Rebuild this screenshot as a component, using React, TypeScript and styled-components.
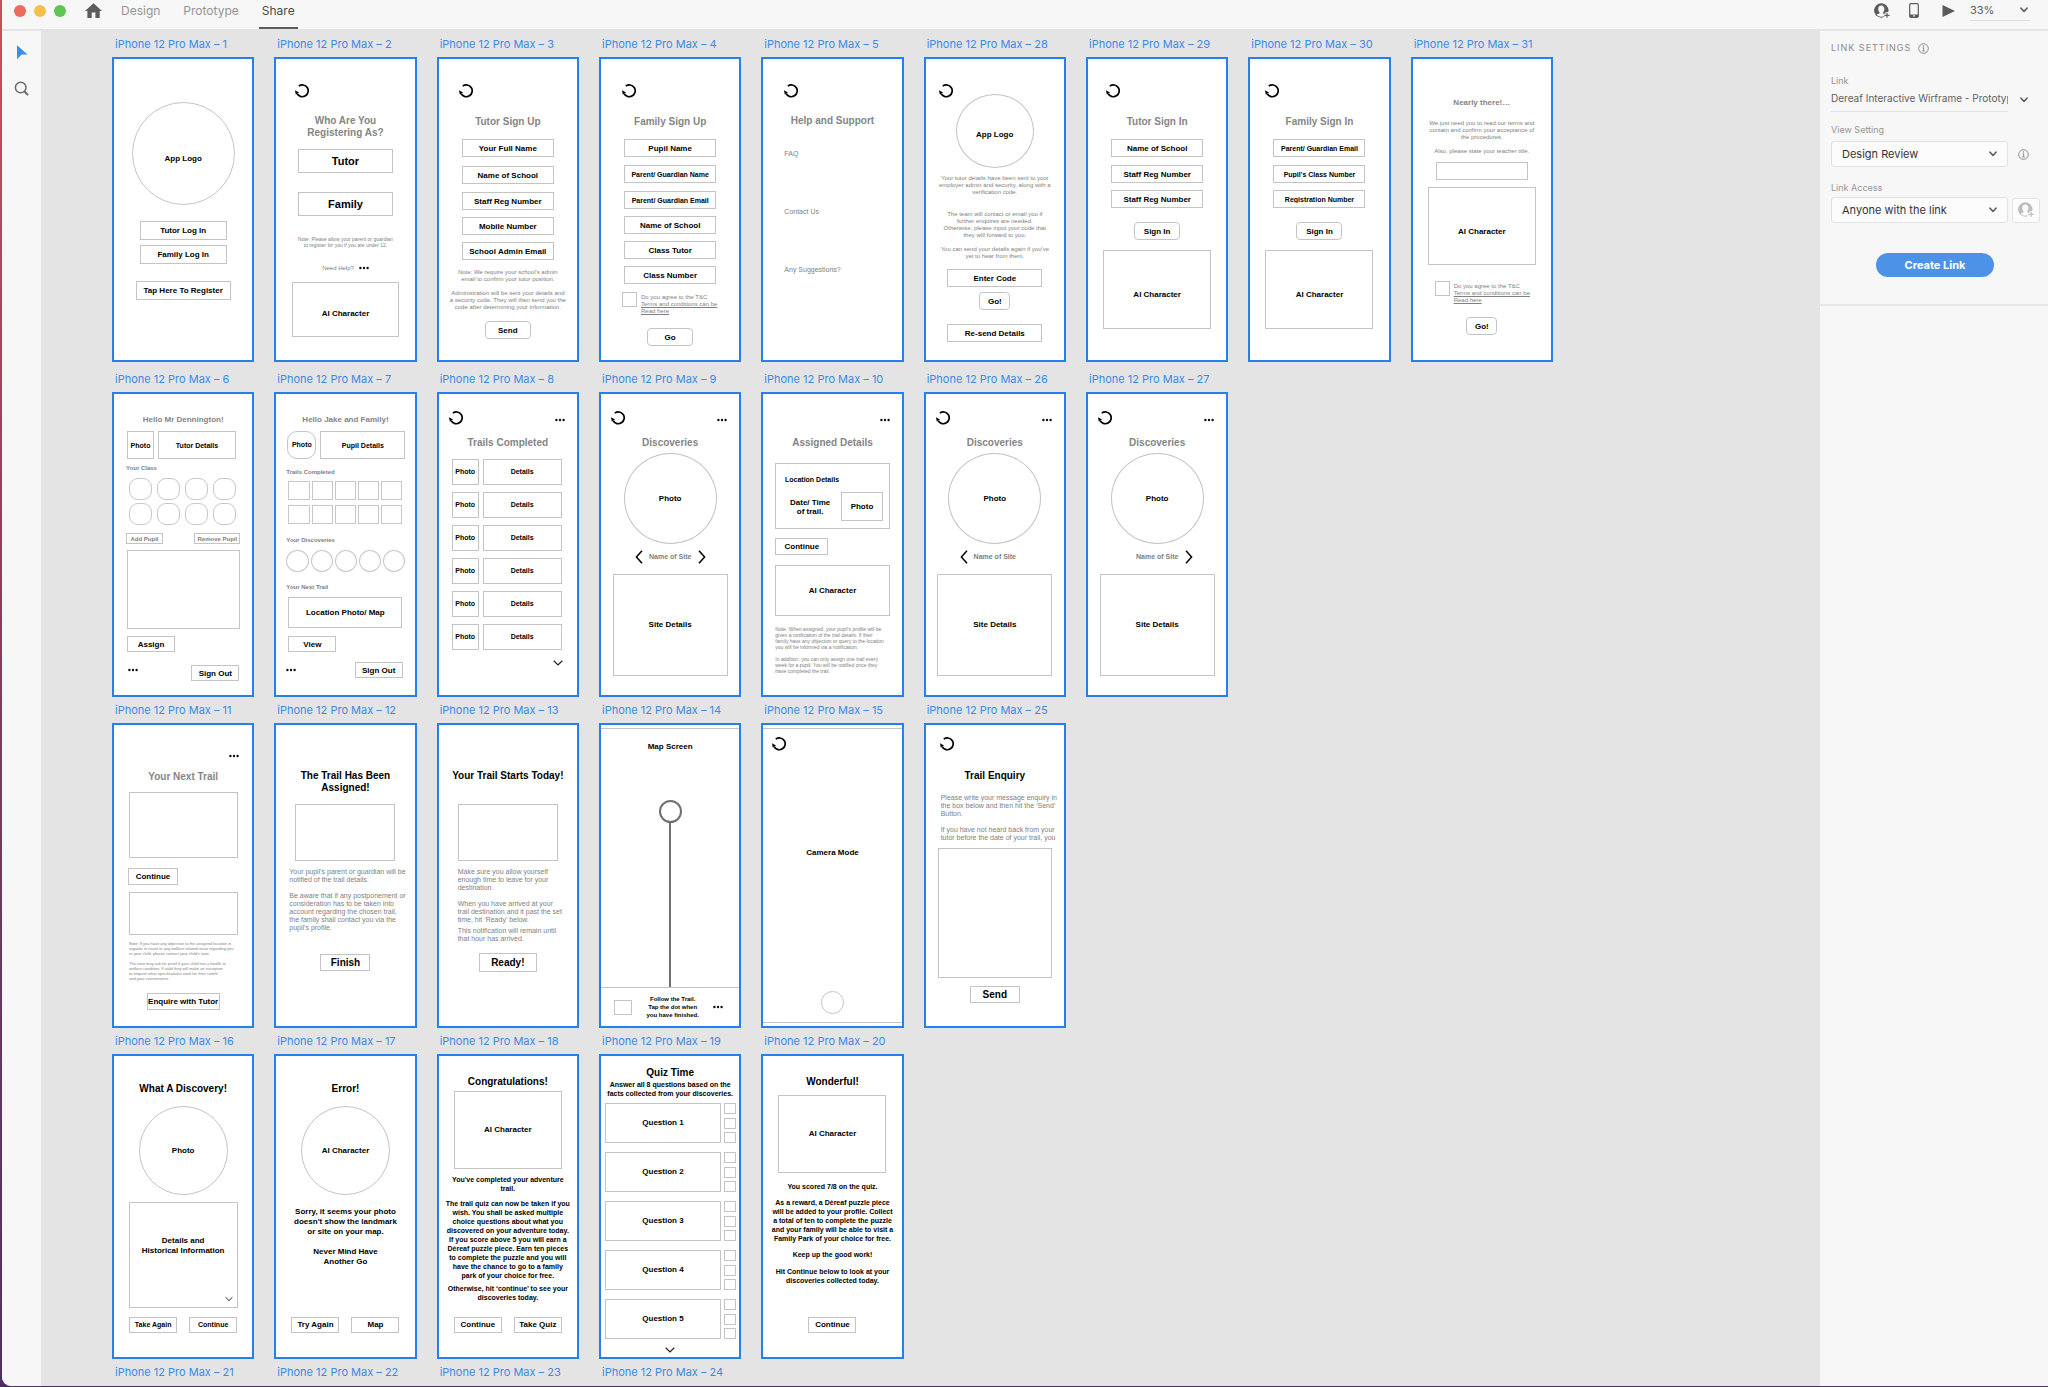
import React from 'react';
import styled, { createGlobalStyle, css } from 'styled-components';

const ui = `Inter, "Noto Sans", sans-serif`;
const wire = `"Liberation Sans", Arial, sans-serif`;

const GlobalStyle = createGlobalStyle`
  *, *::before, *::after { box-sizing: border-box; }
  body { margin: 0; background: #e4e4e4; font-family: ${ui}; }
  button, input, select, textarea { font: inherit; color: inherit; margin: 0; }
  p, h1, h2, h3, figure { margin: 0; }
`;

/* ---------- application frame ---------- */

const Desktop = styled.div`
  min-height: 100vh;
  display: flex;
  padding: 0 0 1px 2px;
  background: linear-gradient(180deg, #c9505c 0%, #8e3a5c 45%, #4d3062 100%);
`;

const Window = styled.div`
  flex: 1;
  min-width: 0;
  display: flex;
  flex-direction: column;
  background: #e4e4e4;
  border-bottom-left-radius: 9px;
  overflow: hidden;
`;

const TopBar = styled.header`
  height: 31px;
  display: flex;
  justify-content: space-between;
  background: #f7f7f7;
  border-bottom: 2px solid #e4e4e4;
  color: #5c5c5c;
`;

const TopGroup = styled.div<{ $gap: number; $end?: boolean }>`
  display: flex;
  align-items: center;
  gap: ${p => p.$gap}px;
  padding: ${p => (p.$end ? '0 18px 8px 0' : '0 0 8px 12px')};
`;

const Lights = styled.div`
  display: flex;
  gap: 8px;
  padding-right: 3px;
`;

const Light = styled.span<{ $color: string }>`
  width: 12px;
  height: 12px;
  border-radius: 50%;
  background: ${p => p.$color};
`;

const IconButton = styled.button`
  display: flex;
  padding: 0;
  border: 0;
  background: none;
`;

const TopActions = styled.div`
  display: flex;
  align-items: center;
  gap: 19px;
`;

const Tabs = styled.nav`
  display: flex;
  align-self: flex-start;
  gap: 17px;
`;

const Tab = styled.button<{ $active?: boolean }>`
  height: 29px;
  padding: 0 3px 6px;
  border: 0;
  border-bottom: 2px solid ${p => (p.$active ? '#5c5c5c' : 'transparent')};
  background: none;
  font-size: 12px;
  line-height: 20px;
  color: ${p => (p.$active ? '#4b4b4b' : '#959595')};
`;

const Main = styled.div`
  flex: 1;
  display: flex;
`;

const ToolRail = styled.aside`
  width: 39px;
  display: flex;
  flex-direction: column;
  align-items: center;
  gap: 21px;
  padding-top: 14px;
  background: #f7f7f7;
`;

/* ---------- canvas ---------- */

const Canvas = styled.main`
  flex: 1;
  min-width: 0;
  padding: 0 267px 0 71px;
`;

const Row = styled.section<{ $mt?: number }>`
  display: grid;
  grid-template-columns: repeat(9, minmax(0, 1fr));
  column-gap: 20px;
  margin-top: ${p => p.$mt ?? 0}px;
`;

const BoardName = styled.figcaption`
  padding-left: 3px;
  font-size: 11px;
  line-height: 26px;
  white-space: nowrap;
  color: #3b8ae6;
`;

const Sheet = styled.div`
  height: 305px;
  display: flex;
  flex-direction: column;
  align-items: center;
  border: 2px solid #2680eb;
  background: #fff;
  font-family: ${wire};
  color: #000;
  overflow: hidden;
`;

type Place = { $mt?: number; $x?: number };

const place = css<Place>`
  flex-shrink: 0;
  margin-top: ${p => p.$mt ?? 0}px;
  ${p => p.$x !== undefined && `align-self: flex-start; margin-left: ${p.$x}px;`}
`;

const Title = styled.h2<Place & { $dark?: boolean; $small?: boolean }>`
  ${place}
  padding-top: 1px;
  margin-bottom: -1px;
  font-size: ${p => (p.$small ? 8 : 10)}px;
  line-height: ${p => (p.$small ? 10 : 12)}px;
  font-weight: 700;
  text-align: center;
  white-space: pre;
  color: ${p => (p.$dark ? '#000' : '#858585')};
`;

const Caption = styled.h3<Place>`
  ${place}
  font-size: 6px;
  line-height: 8px;
  font-weight: 700;
  color: #808080;
`;

const Copy = styled.p<Place & { $size: number; $lh: number; $bold?: boolean; $left?: boolean; $strong?: boolean }>`
  ${place}
  font-size: ${p => p.$size}px;
  line-height: ${p => p.$lh}px;
  font-weight: ${p => (p.$bold ? 700 : 400)};
  text-align: ${p => (p.$left ? 'left' : 'center')};
  white-space: pre;
  color: ${p => (p.$bold ? '#000' : '#808080')};
`;

type Shape = Place & { $w: number; $h: number; $size?: number; $drop?: number; $r?: string };

const shape = css<Shape>`
  ${place}
  width: ${p => p.$w}px;
  height: ${p => p.$h}px;
  padding: ${p => p.$drop ?? 0}px 0 0;
  border: 1px solid #c4c4c4;
  border-radius: ${p => p.$r ?? '0'};
  background: #fff;
  font-family: ${wire};
  font-size: ${p => p.$size ?? 8}px;
  line-height: 10px;
  font-weight: 700;
  text-align: center;
  white-space: nowrap;
`;

const Box = styled.div<Shape>`
  ${shape}
  display: flex;
  align-items: center;
  justify-content: center;
`;

const Action = styled.button<Shape & { $muted?: boolean }>`
  ${shape}
  ${p => p.$muted && 'color: #808080;'}
`;

const Field = styled.input<Shape>`
  ${shape}
`;

const Message = styled.textarea<Shape>`
  ${shape}
  resize: none;
  display: block;
`;

const Tick = styled.input.attrs({ type: 'checkbox' })<{ $w: number; $h: number }>`
  appearance: none;
  flex-shrink: 0;
  width: ${p => p.$w}px;
  height: ${p => p.$h}px;
  border: 1px solid #c4c4c4;
  background: #fff;
`;

const Line = styled.div<Place & { $w?: string; $gap?: number; $spread?: boolean; $top?: boolean; $pad?: string }>`
  ${place}
  width: ${p => p.$w ?? 'auto'};
  display: flex;
  align-items: ${p => (p.$top ? 'flex-start' : 'center')};
  justify-content: ${p => (p.$spread ? 'space-between' : 'flex-start')};
  gap: ${p => p.$gap ?? 0}px;
  padding: ${p => p.$pad ?? '0'};
`;

const Tiles = styled.div<Place & { $w: number; $cols: number; $gap: string; $h: number; $r?: string }>`
  ${place}
  width: ${p => p.$w}px;
  display: grid;
  grid-template-columns: repeat(${p => p.$cols}, 1fr);
  grid-auto-rows: ${p => p.$h}px;
  gap: ${p => p.$gap};

  & > span {
    border: 1px solid #c8c8c8;
    border-radius: ${p => p.$r ?? '0'};
  }
`;

const Terms = styled.label`
  padding-top: 2px;
  font-size: 6px;
  line-height: 7px;
  white-space: pre;
  color: #808080;

  a { color: inherit; text-decoration: underline; }
`;

const Slot = styled.span`
  width: 7px;
  display: flex;
`;

/* ---------- canvas icons ---------- */

const Icon = styled.svg`
  display: block;
  flex-shrink: 0;
`;

const Refresh = () => (
  <Icon width="14" height="14" viewBox="0 0 14 14" aria-label="Reload">
    <path d="M3.8 2.1A5.900 5.900 0 1 1 2.200 9.800" fill="none" stroke="#000" strokeWidth="1.700" />
    <path d="M0 6.200 4 8.500.8 10.600Z" fill="#000" />
  </Icon>
);

const Mark = styled.div<Place>`
  ${place}
`;

const Back = ({ x, mt = 25 }: { x: number; mt?: number }) => (
  <Mark $x={x} $mt={mt}><Refresh /></Mark>
);

const Dots = () => (
  <Icon width="10" height="4" viewBox="0 0 10 4" aria-label="More">
    <circle cx="1.4" cy="2" r="1.2" fill="#111" />
    <circle cx="5" cy="2" r="1.2" fill="#111" />
    <circle cx="8.6" cy="2" r="1.2" fill="#111" />
  </Icon>
);

const DownMark = ({ w = 10 }: { w?: number }) => (
  <Icon width={w} height="6" viewBox="0 0 10 6" aria-label="Scroll down">
    <path d="M.7.8 5 5 9.3.8" fill="none" stroke="#222" strokeWidth="1.2" />
  </Icon>
);

const SideMark = ({ flip }: { flip?: boolean }) => (
  <Icon width="8" height="14" viewBox="0 0 8 14" aria-label={flip ? 'Next' : 'Previous'}>
    <path d={flip ? 'M1 .7 6.600 7 1 13.300' : 'M7 .7 1.400 7 7 13.300'} fill="none" stroke="#000" strokeWidth="1.5" />
  </Icon>
);

/* ---------- repeated wireframe parts ---------- */

const Board = ({ n, children }: { n: number; children?: React.ReactNode }) => (
  <figure>
    <BoardName>iPhone 12 Pro Max – {n}</BoardName>
    {children && <Sheet>{children}</Sheet>}
  </figure>
);

const Entry = ({ text, mt, size = 8, w = 92 }: { text: string; mt: number; size?: number; w?: number }) => (
  <Field $w={w} $h={18} $mt={mt} $size={size} defaultValue={text} aria-label={text || 'Teacher title'} />
);

const Agreement = ({ id, mt, x }: { id: string; mt: number; x: number }) => (
  <Line $mt={mt} $x={x} $gap={4} $top>
    <Tick id={id} $w={15} $h={15} />
    <Terms htmlFor={id}>
      {'Do you agree to the T&C\n'}
      <a href="#terms">{'Terms and conditions can be\nRead here'}</a>
    </Terms>
  </Line>
);

const PageHead = ({ back = true }: { back?: boolean }) => (
  <Line $w="100%" $mt={17} $spread $pad="0 12px 0 10px">
    {back ? <Refresh /> : <Slot />}
    <Mark $mt={3}><Dots /></Mark>
  </Line>
);

const Pair = ({ left, right, mt, size = 8 }: { left: string; right: string; mt: number; size?: number }) => (
  <Line $w="108px" $mt={mt} $spread>
    <Action $w={48} $h={16} $size={size}>{left}</Action>
    <Action $w={48} $h={16} $size={size}>{right}</Action>
  </Line>
);

const Discovery = ({ n, prev, next }: { n: number; prev?: boolean; next?: boolean }) => (
  <Board n={n}>
    <PageHead />
    <Title $mt={11}>Discoveries</Title>
    <Box $w={93} $h={91} $mt={5} $r="50%">Photo</Box>
    <Line $w="70px" $mt={6} $spread>
      <Slot>{prev && <SideMark />}</Slot>
      <Copy $size={7} $lh={14}><b>Name of Site</b></Copy>
      <Slot>{next && <SideMark flip />}</Slot>
    </Line>
    <Box $w={115} $h={102} $mt={10}>Site Details</Box>
  </Board>
);

const tiles = (count: number) => Array.from({ length: count }, (_, i) => <span key={i} />);

const PlanCard = styled.div`
  flex-shrink: 0;
  width: 115px;
  height: 66px;
  margin-top: 15px;
  padding: 11px 6px 6px 9px;
  border: 1px solid #c4c4c4;
`;

const DetailsCard = styled.div`
  flex-shrink: 0;
  width: 109px;
  height: 106px;
  margin-top: 7px;
  padding: 33px 4px 5px;
  display: flex;
  flex-direction: column;
  align-items: center;
  border: 1px solid #c4c4c4;
`;

const CardFoot = styled.div`
  margin-top: auto;
  align-self: flex-end;
`;

const MapArea = styled.div`
  width: 100%;
  height: 259px;
  margin-top: 3px;
  display: flex;
  flex-direction: column;
  align-items: center;
  border-top: 1px solid #c4c4c4;
`;

const Pin = styled.div`
  width: 23px;
  height: 23px;
  margin-top: 49px;
  border: 2px solid #707070;
  border-radius: 50%;
`;

const Trail = styled.div`
  flex: 1;
  width: 2px;
  background: #707070;
`;

const MapFoot = styled.div`
  flex: 1;
  width: 100%;
  display: flex;
  align-items: center;
  justify-content: space-between;
  padding: 0 16px 0 13px;
  border-top: 1px solid #c4c4c4;
`;

const CameraArea = styled.div`
  width: 100%;
  height: 295px;
  margin-top: 3px;
  display: flex;
  flex-direction: column;
  align-items: center;
  border: 1px solid #c4c4c4;
  border-width: 1px 0;
`;

const Answers = styled.div`
  height: 40px;
  display: flex;
  flex-direction: column;
  justify-content: space-between;
`;

/* ---------- settings panel ---------- */

const Panel = styled.aside`
  width: 228px;
  background: #f7f7f7;
`;

const PanelSection = styled.section`
  padding: 9px 8px 27px 11px;
  border-bottom: 2px solid #e6e6e6;
`;

const PanelTitle = styled.h2`
  display: flex;
  align-items: center;
  gap: 7px;
  font-size: 9px;
  line-height: 16px;
  font-weight: 400;
  letter-spacing: 1px;
  color: #8c8c8c;
`;

const PanelLabel = styled.label<{ $mt: number }>`
  display: block;
  margin-top: ${p => p.$mt}px;
  font-size: 9px;
  line-height: 12px;
  color: #969696;
`;

const PanelLine = styled.div<{ $mt?: number }>`
  display: grid;
  grid-template-columns: minmax(0, 1fr) 28px;
  align-items: center;
  justify-items: center;
  column-gap: 4px;
  margin-top: ${p => p.$mt ?? 0}px;

  & > svg { margin-right: 5px; }
`;

const PlainSelect = styled.select`
  appearance: none;
  width: 100%;
  height: 25px;
  padding: 0 0 2px;
  border: 0;
  border-bottom: 1px solid #e2e2e2;
  background: none;
  font-size: 10px;
  color: #5f5f5f;
  text-overflow: clip;
`;

const SelectFrame = styled.div`
  width: 100%;
  height: 26px;
  display: grid;
  grid-template-columns: minmax(0, 1fr) 18px;
  align-items: center;
  border: 1px solid #e2e2e2;
  border-radius: 3px;
  background: #fcfcfc;

  select {
    grid-area: 1 / 1 / 2 / 3;
    appearance: none;
    height: 24px;
    padding: 0 20px 0 10px;
    border: 0;
    background: none;
    font-size: 11px;
    color: #333;
  }

  svg { grid-area: 1 / 2; pointer-events: none; }
`;

const InviteButton = styled.button`
  width: 28px;
  height: 25px;
  display: flex;
  align-items: center;
  justify-content: center;
  padding: 0;
  border: 1px solid #e4e4e4;
  border-radius: 3px;
  background: #fcfcfc;
`;

const CreateButton = styled.button`
  display: block;
  width: 118px;
  height: 24px;
  margin: 30px 0 0 45px;
  padding: 0;
  border: 0;
  border-radius: 12px;
  background: #4c93e8;
  font-size: 11px;
  font-weight: 700;
  color: #fff;
`;

const Zoom = styled.label`
  width: 60px;
  height: 20px;
  display: grid;
  grid-template-columns: 1fr 10px;
  align-items: center;
  border-bottom: 1px solid #dedede;

  select {
    grid-area: 1 / 1 / 2 / 3;
    appearance: none;
    height: 18px;
    padding: 0;
    border: 0;
    background: none;
    font-size: 11px;
  }

  svg { grid-area: 1 / 2; pointer-events: none; }
`;

const Chevron = () => (
  <Icon width="8" height="6" viewBox="0 0 8 6" aria-hidden="true">
    <path d="M1 1.2 4 4.4 7 1.2" fill="none" stroke="#5c5c5c" strokeWidth="1.6" strokeLinecap="round" strokeLinejoin="round" />
  </Icon>
);

const Info = () => (
  <Icon width="11" height="11" viewBox="0 0 11 11" aria-label="Information">
    <circle cx="5.5" cy="5.5" r="4.8" fill="none" stroke="#8a8a8a" />
    <path d="M4.6 4.8h1v3M4.3 7.9h2.5" fill="none" stroke="#8a8a8a" />
    <circle cx="5.4" cy="3" r=".8" fill="#8a8a8a" />
  </Icon>
);

const Person = ({ color = '#5c5c5c', bg = '#f7f7f7' }: { color?: string; bg?: string }) => (
  <Icon width="16" height="16" viewBox="0 0 16 16" aria-hidden="true">
    <circle cx="7.3" cy="7.5" r="7.2" fill={color} />
    <path
      d="M7.3 2.4C5.4 2.4 4.2 3.8 4.2 5.8c0 1.5.5 2.7 1.3 3.4v1c-.8.5-2 .8-2.9 1.4 1.1 1.5 2.7 2.2 4.7 2.2s3.4-.7 4.5-2c-.8-.7-1.9-1-2.7-1.5V9.2c.8-.7 1.3-1.9 1.3-3.4 0-2-1.2-3.4-3.1-3.4Z"
      fill={bg}
    />
    <path d="M13 9v7M9.700 12.300h6.300" stroke={bg} strokeWidth="3" />
    <path d="M13 9.800v5M10.500 12.300h5" stroke={color} strokeWidth="1.200" />
  </Icon>
);

const questions = [1, 2, 3, 4, 5];

export default function App() {
  return (
    <Desktop>
      <GlobalStyle />
      <Window>
        <TopBar>
          <TopGroup $gap={16}>
            <Lights>
              <Light $color="#ed6a5e" />
              <Light $color="#f4bf4f" />
              <Light $color="#61c454" />
            </Lights>
            <IconButton aria-label="Home">
              <Icon width="17" height="15" viewBox="0 0 17 15">
                <path d="M8.500.3 17 8h-2.300v7h-4.300V9.500H6.700V15H2.400V8H0Z" fill="#5c5c5c" />
              </Icon>
            </IconButton>
            <Tabs>
              <Tab>Design</Tab>
              <Tab>Prototype</Tab>
              <Tab $active>Share</Tab>
            </Tabs>
          </TopGroup>
          <TopGroup $gap={14} $end>
            <TopActions>
              <IconButton aria-label="Invite"><Person /></IconButton>
              <IconButton aria-label="Device preview">
                <Icon width="10" height="15" viewBox="0 0 10 15">
                  <rect x=".7" y=".7" width="8.600" height="13.600" rx="1.200" fill="none" stroke="#5c5c5c" strokeWidth="1.200" />
                  <path d="M.7 11.500h8.600v2.800H.7Z" fill="#5c5c5c" />
                  <circle cx="5" cy="12.900" r=".8" fill="#f7f7f7" />
                </Icon>
              </IconButton>
              <IconButton aria-label="Play">
                <Icon width="18" height="12" viewBox="0 0 18 12">
                  <path d="M4.500 0 17 6 4.500 12Z" fill="#5c5c5c" />
                </Icon>
              </IconButton>
            </TopActions>
            <Zoom>
              <select aria-label="Zoom level"><option>33%</option></select>
              <Chevron />
            </Zoom>
          </TopGroup>
        </TopBar>

        <Main>
          <ToolRail>
            <IconButton aria-label="Select">
              <Icon width="14" height="15" viewBox="0 0 14 15">
                <path d="M2 .3 12.500 9.600H6.700L2 14.300Z" fill="#3f8ee6" />
              </Icon>
            </IconButton>
            <IconButton aria-label="Zoom">
              <Icon width="15" height="15" viewBox="0 0 15 15">
                <circle cx="6.700" cy="6.500" r="5.300" fill="none" stroke="#6a6a6a" strokeWidth="1.500" />
                <path d="M10.500 10.500 14 14.200" stroke="#6a6a6a" strokeWidth="1.900" />
              </Icon>
            </IconButton>
          </ToolRail>

          <Canvas>
            <Row>
              <Board n={1}>
                <Box $w={103} $h={103} $mt={43} $r="50%" $drop={10}>App Logo</Box>
                <Action $w={87} $h={19} $mt={16}>Tutor Log In</Action>
                <Action $w={87} $h={19} $mt={5}>Family Log In</Action>
                <Action $w={95} $h={19} $mt={17}>Tap Here To Register</Action>
              </Board>

              <Board n={2}>
                <Back x={19} />
                <Title $mt={16}>{'Who Are You\nRegistering As?'}</Title>
                <Action $w={95} $h={24} $mt={11} $size={11}>Tutor</Action>
                <Action $w={95} $h={24} $mt={19} $size={11}>Family</Action>
                <Copy $mt={20} $size={5} $lh={6}>{'Note: Please allow your parent or guardian\nto register for you if you are under 12.'}</Copy>
                <Line $mt={16} $gap={5}>
                  <Copy $size={6} $lh={8}>Need Help?</Copy>
                  <Dots />
                </Line>
                <Box $w={107} $h={55} $mt={10} $drop={8}>AI Character</Box>
              </Board>

              <Board n={3}>
                <Back x={20} />
                <Title $mt={17}>Tutor Sign Up</Title>
                <Entry text="Your Full Name" mt={12} />
                <Entry text="Name of School" mt={9} />
                <Entry text="Staff Reg Number" mt={8} />
                <Entry text="Mobile Number" mt={7} />
                <Entry text="School Admin Email" mt={7} />
                <Copy $mt={9} $size={6} $lh={7}>
                  {"Note: We require your school's admin\nemail to confirm your tutor position.\n\nAdministration will be sent your details and\na security code. They will then send you the\ncode after determining your information."}
                </Copy>
                <Action $w={46} $h={18} $mt={10} $r="4px" $drop={1}>Send</Action>
              </Board>

              <Board n={4}>
                <Back x={21} />
                <Title $mt={17}>Family Sign Up</Title>
                <Entry text="Pupil Name" mt={12} />
                <Entry text="Parent/ Guardian Name" mt={8} size={7} />
                <Entry text="Parent/ Guardian Email" mt={8} size={7} />
                <Entry text="Name of School" mt={7} />
                <Entry text="Class Tutor" mt={7} />
                <Entry text="Class Number" mt={7} />
                <Agreement id="agree-family" mt={8} x={21} />
                <Action $w={46} $h={18} $mt={13} $r="4px" $drop={1}>Go</Action>
              </Board>

              <Board n={5}>
                <Back x={21} />
                <Title $mt={16}>Help and Support</Title>
                <Copy $mt={24} $x={21} $size={7} $lh={8}>FAQ</Copy>
                <Copy $mt={50} $x={21} $size={7} $lh={8}>Contact Us</Copy>
                <Copy $mt={50} $x={21} $size={7} $lh={8}>Any Suggestions?</Copy>
              </Board>

              <Board n={28}>
                <Line $mt={25} $x={13} $gap={3} $top>
                  <Refresh />
                  <Box $w={78} $h={74} $mt={10} $r="50%" $drop={8}>App Logo</Box>
                </Line>
                <Copy $mt={7} $size={6} $lh={7}>{'Your tutor details have been sent to your\nemployer admin and security, along with a\nverification code.'}</Copy>
                <Copy $mt={15} $size={6} $lh={7}>{'The team will contact or email you if\nfurther enquires are needed.\nOtherwise, please input your code that\nthey will forward to you.'}</Copy>
                <Copy $mt={7} $size={6} $lh={7}>{"You can send your details again if you've\nyet to hear from them."}</Copy>
                <Entry text="Enter Code" mt={9} w={95} />
                <Action $w={31} $h={18} $mt={5} $r="4px" $drop={1}>Go!</Action>
                <Action $w={95} $h={18} $mt={14} $drop={1}>Re-send Details</Action>
              </Board>

              <Board n={29}>
                <Back x={18} />
                <Title $mt={17}>Tutor Sign In</Title>
                <Entry text="Name of School" mt={12} />
                <Entry text="Staff Reg Number" mt={8} />
                <Entry text="Staff Reg Number" mt={7} />
                <Action $w={46} $h={18} $mt={14} $r="4px" $drop={1}>Sign In</Action>
                <Box $w={108} $h={79} $mt={10} $drop={11}>AI Character</Box>
              </Board>

              <Board n={30}>
                <Back x={15} />
                <Title $mt={17}>Family Sign In</Title>
                <Entry text="Parent/ Guardian Email" mt={12} size={7} />
                <Entry text="Pupil's Class Number" mt={8} size={7} />
                <Entry text="Registration Number" mt={7} size={7} />
                <Action $w={46} $h={18} $mt={14} $r="4px" $drop={1}>Sign In</Action>
                <Box $w={108} $h={79} $mt={10} $drop={11}>AI Character</Box>
              </Board>

              <Board n={31}>
                <Title $mt={38} $small>Nearly there!…</Title>
                <Copy $mt={13} $size={6} $lh={7}>{'We just need you to read our terms and\ncontain and confirm your acceptance of\nthe procedures.\n\nAlso, please state your teacher title.'}</Copy>
                <Entry text="" mt={7} />
                <Box $w={108} $h={78} $mt={7} $drop={11}>AI Character</Box>
                <Agreement id="agree-teacher" mt={16} x={22} />
                <Action $w={31} $h={18} $mt={13} $r="4px" $drop={1}>Go!</Action>
              </Board>
            </Row>

            <Row $mt={4}>
              <Board n={6}>
                <Title $mt={20} $small>Hello Mr Dennington!</Title>
                <Line $mt={7} $x={13} $gap={4}>
                  <Box $w={27} $h={28} $size={7} $drop={2}>Photo</Box>
                  <Box $w={78} $h={28} $size={7} $drop={2}>Tutor Details</Box>
                </Line>
                <Caption $mt={5} $x={12}>Your Class</Caption>
                <Tiles $w={107} $cols={4} $h={22} $gap="3px 5px" $mt={6} $x={15} $r="9px">{tiles(8)}</Tiles>
                <Line $w="100%" $mt={8} $spread $pad="0 12px">
                  <Action $w={37} $h={11} $size={6} $muted>Add Pupil</Action>
                  <Action $w={46} $h={11} $size={6} $muted>Remove Pupil</Action>
                </Line>
                <Box $w={113} $h={79} $mt={6} $x={13} />
                <Action $w={48} $h={16} $mt={7} $x={13} $drop={1}>Assign</Action>
                <Line $w="100%" $mt={13} $spread $top $pad="0 13px 0 14px">
                  <Mark $mt={3}><Dots /></Mark>
                  <Action $w={48} $h={16} $drop={1}>Sign Out</Action>
                </Line>
              </Board>

              <Board n={7}>
                <Title $mt={20} $small>Hello Jake and Family!</Title>
                <Line $mt={7} $x={11} $gap={4}>
                  <Box $w={29} $h={28} $size={7} $r="10px">Photo</Box>
                  <Box $w={85} $h={28} $size={7} $drop={2}>Pupil Details</Box>
                </Line>
                <Caption $mt={9} $x={10}>Trails Completed</Caption>
                <Tiles $w={114} $cols={5} $h={19} $gap="5px 2px" $mt={5} $x={12}>{tiles(10)}</Tiles>
                <Caption $mt={12} $x={10}>Your Discoveries</Caption>
                <Tiles $w={119} $cols={5} $h={22} $gap="2px" $mt={6} $x={10} $r="50%">{tiles(5)}</Tiles>
                <Caption $mt={11} $x={10}>Your Next Trail</Caption>
                <Box $w={114} $h={31} $mt={6} $x={12}>Location Photo/ Map</Box>
                <Action $w={48} $h={16} $mt={8} $x={12} $drop={1}>View</Action>
                <Line $w="100%" $mt={10} $spread $pad="0 12px 0 10px">
                  <Dots />
                  <Action $w={48} $h={16} $drop={1}>Sign Out</Action>
                </Line>
              </Board>

              <Board n={8}>
                <PageHead />
                <Title $mt={11}>Trails Completed</Title>
                {[11, 7, 7, 7, 7, 7].map((mt, i) => (
                  <Line key={i} $mt={mt} $x={13} $gap={4}>
                    <Box $w={27} $h={26} $size={7}>Photo</Box>
                    <Box $w={79} $h={26} $size={7}>Details</Box>
                  </Line>
                ))}
                <Line $w="100%" $mt={10} $spread $pad="0 14px 0 0">
                  <Slot />
                  <DownMark />
                </Line>
              </Board>

              <Discovery n={9} prev next />

              <Board n={10}>
                <Line $w="100%" $mt={17} $spread $pad="0 12px 11px 10px">
                  <Slot />
                  <Mark $mt={7}><Dots /></Mark>
                </Line>
                <Title $mt={3}>Assigned Details</Title>
                <PlanCard>
                  <Copy $size={7} $lh={10} $bold $left>Location Details</Copy>
                  <Line $mt={7} $spread $pad="0 0 0 5px">
                    <Copy $size={8} $lh={9} $bold>{'Date/ Time\nof trail.'}</Copy>
                    <Box $w={42} $h={29}>Photo</Box>
                  </Line>
                </PlanCard>
                <Action $w={53} $h={17} $mt={9} $x={12} $drop={1}>Continue</Action>
                <Box $w={115} $h={51} $mt={10}>AI Character</Box>
                <Copy $mt={10} $x={12} $size={5} $lh={6} $left>
                  {"Note: When assigned, your pupil's profile will be\ngiven a notification of the trail details. If their\nfamily have any objection or query to the location\nyou will be informed via a notification.\n\nIn addition, you can only assign one trail every\nweek for a pupil. You will be notified once they\nhave completed the trail."}
                </Copy>
              </Board>

              <Discovery n={26} prev />
              <Discovery n={27} next />
            </Row>

            <Row>
              <Board n={11}>
                <Line $w="100%" $mt={29} $spread $pad="0 13px 0 0">
                  <Slot />
                  <Dots />
                </Line>
                <Title $mt={12}>Your Next Trail</Title>
                <Box $w={109} $h={66} $mt={10} />
                <Action $w={50} $h={17} $mt={10} $x={14} $drop={1}>Continue</Action>
                <Box $w={109} $h={43} $mt={7} />
                <Copy $mt={6} $x={15} $size={4} $lh={5} $left>
                  {"Note: If you have any objection to the assigned location in\nregards to travel or any welfare related issue regarding you\nor your child, please contact your child's tutor.\n\nThe tutor may ask for proof if your child has a health or\nwelfare condition. If valid they will make an exception\nor enquire what specifications work for their comfit\nand your convenience."}
                </Copy>
                <Action $w={73} $h={17} $mt={12}>Enquire with Tutor</Action>
              </Board>

              <Board n={12}>
                <Title $mt={44} $dark>{'The Trail Has Been\nAssigned!'}</Title>
                <Box $w={100} $h={57} $mt={11} />
                <Copy $mt={7} $x={13} $size={7} $lh={8} $left>
                  {"Your pupil's parent or guardian will be\nnotified of the trail details.\n\nBe aware that if any postponement or\nconsideration has to be taken into\naccount regarding the chosen trail,\nthe family shall contact you via the\npupil's profile."}
                </Copy>
                <Action $w={50} $h={17} $mt={22} $size={10}>Finish</Action>
              </Board>

              <Board n={13}>
                <Title $mt={44} $dark>Your Trail Starts Today!</Title>
                <Box $w={100} $h={57} $mt={23} />
                <Copy $mt={7} $x={19} $size={7} $lh={8} $left>
                  {"Make sure you allow yourself\nenough time to leave for your\ndestination.\n\nWhen you have arrived at your\ntrail destination and it past the set\ntime, hit ‘Ready’ below."}
                </Copy>
                <Copy $mt={3} $x={19} $size={7} $lh={8} $left>{'This notification will remain until\nthat hour has arrived.'}</Copy>
                <Action $w={58} $h={19} $mt={10} $size={10}>Ready!</Action>
              </Board>

              <Board n={14}>
                <MapArea>
                  <Title $mt={12} $small $dark>Map Screen</Title>
                  <Pin />
                  <Trail />
                </MapArea>
                <MapFoot>
                  <Tick $w={18} $h={15} aria-label="Trail finished" />
                  <Copy $size={6} $lh={8} $bold>{'Follow the Trail.\nTap the dot when\nyou have finished.'}</Copy>
                  <Dots />
                </MapFoot>
              </Board>

              <Board n={15}>
                <CameraArea>
                  <Back x={9} mt={8} />
                  <Title $mt={96} $small $dark>Camera Mode</Title>
                  <Action $w={23} $h={23} $mt={134} $r="50%" aria-label="Shutter" />
                </CameraArea>
              </Board>

              <Board n={25}>
                <Back x={14} mt={12} />
                <Title $mt={18} $dark>Trail Enquiry</Title>
                <Copy $mt={13} $x={15} $size={7} $lh={8} $left>
                  {"Please write your message enquiry in\nthe box below and then hit the ‘Send’\nButton.\n\nIf you have not heard back from your\ntutor before the date of your trail, you"}
                </Copy>
                <Message $w={114} $h={130} $mt={6} aria-label="Message" />
                <Action $w={50} $h={17} $mt={8} $size={10}>Send</Action>
              </Board>
            </Row>

            <Row>
              <Board n={16}>
                <Title $mt={26} $dark>What A Discovery!</Title>
                <Box $w={89} $h={89} $mt={12} $r="50%">Photo</Box>
                <DetailsCard>
                  <Copy $size={8} $lh={10} $bold>{'Details and\nHistorical Information'}</Copy>
                  <CardFoot><DownMark w={8} /></CardFoot>
                </DetailsCard>
                <Pair left="Take Again" right="Continue" mt={9} size={7} />
              </Board>

              <Board n={17}>
                <Title $mt={26} $dark>Error!</Title>
                <Box $w={89} $h={89} $mt={12} $r="50%">AI Character</Box>
                <Copy $mt={12} $size={8} $lh={10} $bold>{"Sorry, it seems your photo\ndoesn't show the landmark\nor site on your map.\n\nNever Mind Have\nAnother Go"}</Copy>
                <Pair left="Try Again" right="Map" mt={50} />
              </Board>

              <Board n={18}>
                <Title $mt={19} $dark>Congratulations!</Title>
                <Box $w={108} $h={78} $mt={4}>AI Character</Box>
                <Copy $mt={6} $size={7} $lh={9} $bold>{"You've completed your adventure\ntrail."}</Copy>
                <Copy $mt={6} $size={7} $lh={9} $bold>
                  {'The trail quiz can now be taken if you\nwish. You shall be asked multiple\nchoice questions about what you\ndiscovered on your adventure today.\nIf you score above 5 you will earn a\nDèreaf puzzle piece. Earn ten pieces\nto complete the puzzle and you will\nhave the chance to go to a family\npark of your choice for free.'}
                </Copy>
                <Copy $mt={4} $size={7} $lh={9} $bold>{'Otherwise, hit ‘continue’ to see your\ndiscoveries today.'}</Copy>
                <Pair left="Continue" right="Take Quiz" mt={15} />
              </Board>

              <Board n={19}>
                <Title $mt={10} $dark>Quiz Time</Title>
                <Copy $mt={2} $size={7} $lh={9} $bold>{'Answer all 8 questions based on the\nfacts collected from your discoveries.'}</Copy>
                {questions.map(q => (
                  <Line key={q} $mt={q === 1 ? 5 : 9} $x={4} $gap={3}>
                    <Box $w={116} $h={40}>Question {q}</Box>
                    <Answers>
                      {[1, 2, 3].map(a => (
                        <Tick key={a} $w={12} $h={11} aria-label={`Question ${q}, answer ${a}`} />
                      ))}
                    </Answers>
                  </Line>
                ))}
                <Line $mt={8}><DownMark /></Line>
              </Board>

              <Board n={20}>
                <Title $mt={19} $dark>Wonderful!</Title>
                <Box $w={108} $h={78} $mt={8}>AI Character</Box>
                <Copy $mt={9} $size={7} $lh={9} $bold>You scored 7/8 on the quiz.</Copy>
                <Copy $mt={7} $size={7} $lh={9} $bold>
                  {'As a reward, a Dèreaf puzzle piece\nwill be added to your profile. Collect\na total of ten to complete the puzzle\nand your family will be able to visit a\nFamily Park of your choice for free.'}
                </Copy>
                <Copy $mt={7} $size={7} $lh={9} $bold>Keep up the good work!</Copy>
                <Copy $mt={8} $size={7} $lh={9} $bold>{'Hit Continue below to look at your\ndiscoveries collected today.'}</Copy>
                <Action $w={48} $h={16} $mt={32}>Continue</Action>
              </Board>
            </Row>

            <Row>
              {[21, 22, 23, 24].map(n => <Board key={n} n={n} />)}
            </Row>
          </Canvas>

          <Panel>
            <PanelSection>
              <PanelTitle>LINK SETTINGS <Info /></PanelTitle>
              <PanelLabel $mt={19} htmlFor="link">Link</PanelLabel>
              <PanelLine>
                <PlainSelect id="link"><option>Dereaf Interactive Wirframe - Prototype</option></PlainSelect>
                <Chevron />
              </PanelLine>
              <PanelLabel $mt={12} htmlFor="view">View Setting</PanelLabel>
              <PanelLine $mt={5}>
                <SelectFrame>
                  <select id="view"><option>Design Review</option></select>
                  <Chevron />
                </SelectFrame>
                <Info />
              </PanelLine>
              <PanelLabel $mt={15} htmlFor="access">Link Access</PanelLabel>
              <PanelLine $mt={3}>
                <SelectFrame>
                  <select id="access"><option>Anyone with the link</option></select>
                  <Chevron />
                </SelectFrame>
                <InviteButton aria-label="Invite people"><Person color="#bdbdbd" bg="#fcfcfc" /></InviteButton>
              </PanelLine>
              <CreateButton>Create Link</CreateButton>
            </PanelSection>
          </Panel>
        </Main>
      </Window>
    </Desktop>
  );
}
